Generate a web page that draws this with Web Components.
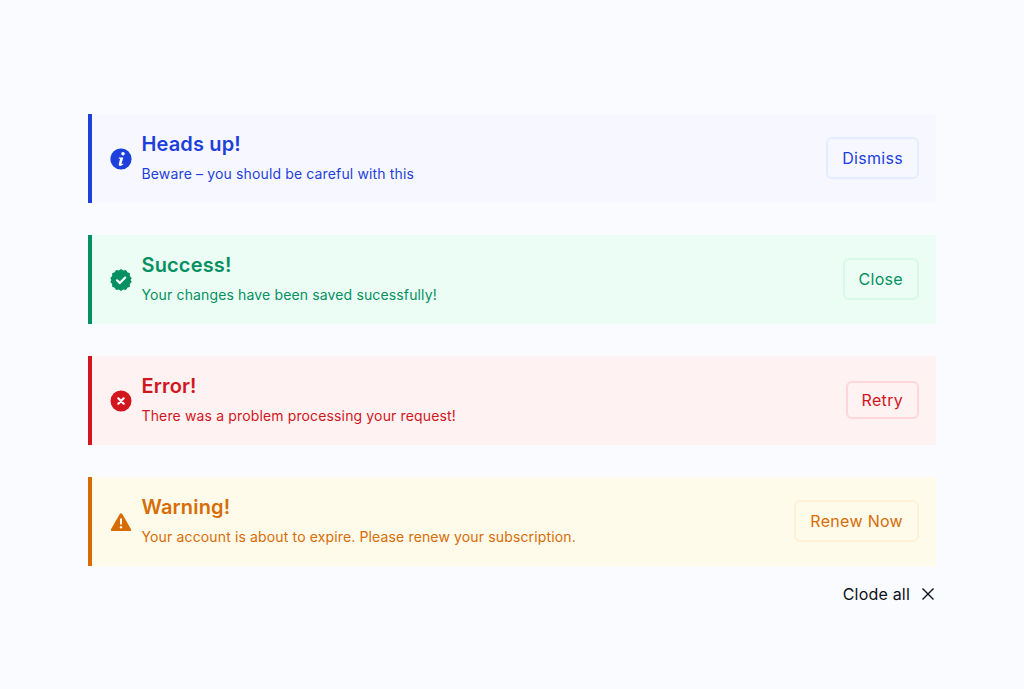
<!DOCTYPE html>
<html lang="en">
<head>
<meta charset="utf-8">
<title>Alerts</title>
<style>
html, body { margin: 0; height: 100%; }
body {
  background: #fafbfe;
  font-family: Inter, "Liberation Sans", sans-serif;
  box-sizing: border-box;
  padding: 114px 88px 0;
}
</style>
</head>
<body>
<alert-stack>
  <alert-box kind="info" heading="Heads up!" action="Dismiss">Beware – you should be careful with this</alert-box>
  <alert-box kind="success" heading="Success!" action="Close">Your changes have been saved sucessfully!</alert-box>
  <alert-box kind="error" heading="Error!" action="Retry">There was a problem processing your request!</alert-box>
  <alert-box kind="warning" heading="Warning!" action="Renew Now">Your account is about to expire. Please renew your subscription.</alert-box>
  <close-all slot="footer">Clode all</close-all>
</alert-stack>

<script>
const icons = {
  info: `<circle cx="11" cy="11" r="10.600" fill="currentColor"/>
    <circle cx="13" cy="5.800" r="1.800" fill="#fff"/>
    <path d="M8.800 9.400h4.500l-1.800 6.300c-.1.400.3.600.6.400l1-.7.4.6c-.9 1.100-2 1.800-3.300 1.800-1.200 0-1.700-.7-1.400-1.900l1.200-4.600c.1-.5-.1-.7-.6-.7h-.8z" fill="#fff"/>`,
  success: `<path d="M11 0l2.300 1.500 2.700-.6 1.300 2.400 2.600.9-.1 2.700L21.700 9l-1 2 1 2-1.900 2.100.1 2.700-2.600.9-1.300 2.400-2.700-.6L11 22l-2.300-1.500-2.700.6-1.300-2.400-2.600-.9.1-2.700L.3 13l1-2-1-2 1.900-2.100-.1-2.700 2.600-.9L6 .9l2.700.6z" fill="currentColor"/>
    <path d="M7 11.300l2.900 2.800L15.200 8.600" fill="none" stroke="#fff" stroke-width="2.200" stroke-linecap="round" stroke-linejoin="round"/>`,
  error: `<circle cx="11" cy="11" r="10.500" fill="currentColor"/>
    <path d="M8.300 8.300l5.400 5.400M13.700 8.300l-5.400 5.400" stroke="#fff" stroke-width="2.200" stroke-linecap="round"/>`,
  warning: `<path d="M11 2.200c.6 0 1 .3 1.300.8l8.700 15.200c.5.900-.1 1.800-1.100 1.800H2.100c-1 0-1.600-.9-1.100-1.800L9.700 3c.3-.5.700-.8 1.300-.8z" fill="currentColor"/>
    <path d="M11 8.200v4.600" stroke="#fff" stroke-width="2" stroke-linecap="round"/>
    <circle cx="11" cy="16.200" r="1.200" fill="#fff"/>`
}

const alertTemplate = document.createElement('template')
alertTemplate.innerHTML = `
<style>
:host {
  display: flex;
  align-items: center;
  box-sizing: border-box;
  height: 89px;
  padding: 0 17px 0 18px;
  color: var(--fg);
  background: var(--bg);
  border-left: 4px solid var(--fg);
  --pad: 7px;
}
:host([kind="info"]) { --fg: #1d3fdc; --bg: #f7f8ff; --line: #e4edff; }
:host([kind="success"]) { --fg: #059062; --bg: #ebfdf4; --line: #d8f9e8; }
:host([kind="error"]) { --fg: #d2161e; --bg: #fef2f2; --line: #fed7da; --pad: 5px; }
:host([kind="warning"]) { --fg: #d76c05; --bg: #fffbeb; --line: #fff1d8; }
svg { flex: none; width: 22px; height: 22px; margin-right: 9.5px; }
.body { flex: 1; min-width: 0; margin-bottom: 4px; }
h2 { margin: 0 0 4px; font-size: 20px; line-height: 30px; font-weight: 600; letter-spacing: 0.15px; }
p { margin: 0; font-size: 14px; line-height: 22px; letter-spacing: 0.14px; }
button {
  font: inherit;
  font-size: 16px;
  line-height: 24px;
  letter-spacing: 0.3px;
  color: inherit;
  background: var(--bg);
  border: 2px solid var(--line);
  border-radius: 6px;
  margin-bottom: 1px;
  padding: var(--pad) 14px;
}
</style>
<svg viewBox="0 0 22 22" aria-hidden="true"></svg>
<div class="body">
  <h2></h2>
  <p><slot></slot></p>
</div>
<button type="button"></button>
`

customElements.define('alert-box',
  class extends HTMLElement {
    constructor () {
      super()
      this.attachShadow({ mode: 'open' })
      this.shadowRoot.appendChild(alertTemplate.content.cloneNode(true))
    }

    connectedCallback () {
      this.shadowRoot.querySelector('svg').innerHTML = icons[this.getAttribute('kind')]
      this.shadowRoot.querySelector('h2').textContent = this.getAttribute('heading')
      this.shadowRoot.querySelector('button').textContent = this.getAttribute('action')
    }
  })

const stackTemplate = document.createElement('template')
stackTemplate.innerHTML = `
<style>
:host { display: flex; flex-direction: column; gap: 32px; }
.footer { display: flex; justify-content: flex-end; margin-top: -16px; }
</style>
<slot></slot>
<div class="footer"><slot name="footer"></slot></div>
`

customElements.define('alert-stack',
  class extends HTMLElement {
    constructor () {
      super()
      this.attachShadow({ mode: 'open' })
      this.shadowRoot.appendChild(stackTemplate.content.cloneNode(true))
    }
  })

const closeTemplate = document.createElement('template')
closeTemplate.innerHTML = `
<style>
:host {
  display: inline-flex;
  align-items: center;
  gap: 10px;
  font-size: 16px;
  line-height: 24px;
  letter-spacing: 0.2px;
  color: #0b1020;
}
svg { width: 16px; height: 16px; }
</style>
<slot></slot>
<svg viewBox="0 0 16 16" aria-hidden="true"><path d="M2.500 2.500l11 11M13.500 2.500l-11 11" fill="none" stroke="currentColor" stroke-width="1.400"/></svg>
`

customElements.define('close-all',
  class extends HTMLElement {
    constructor () {
      super()
      this.attachShadow({ mode: 'open' })
      this.shadowRoot.appendChild(closeTemplate.content.cloneNode(true))
    }
  })
</script>
</body>
</html>
